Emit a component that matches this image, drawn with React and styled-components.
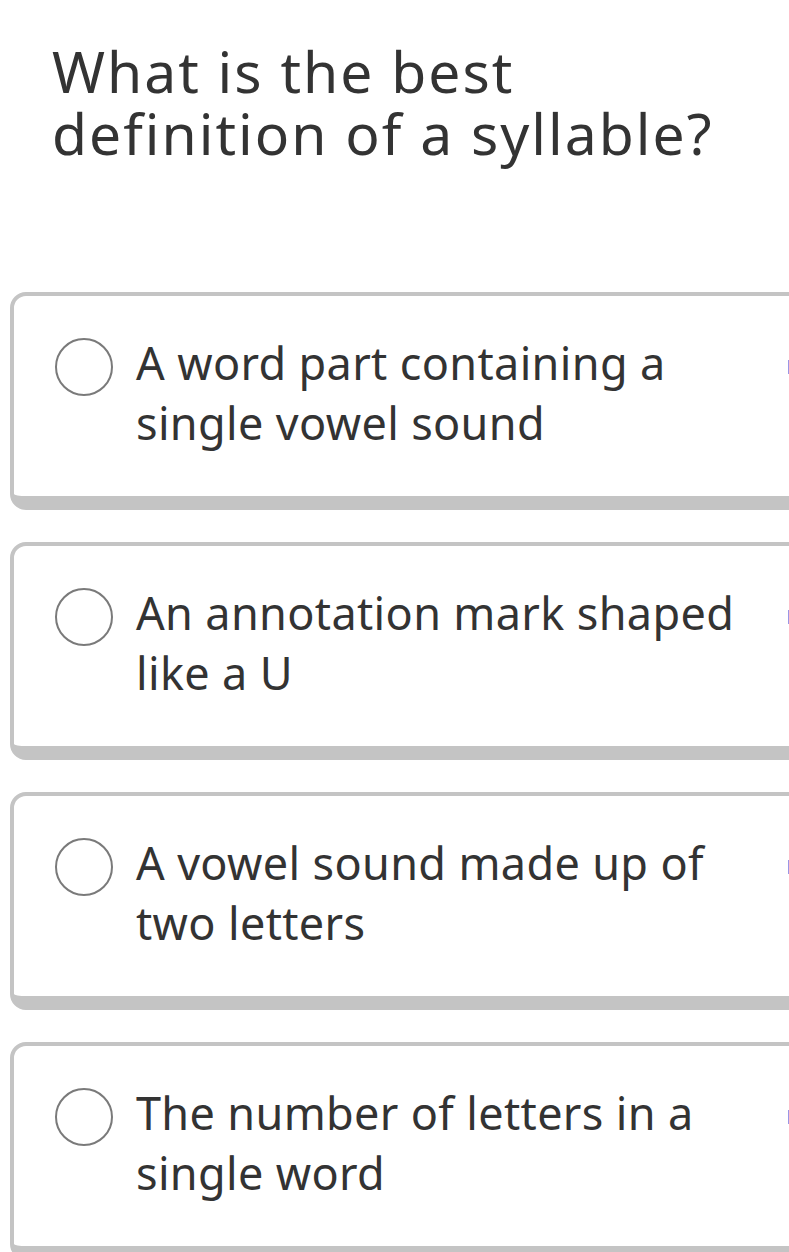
import React from "react";
import styled, { createGlobalStyle } from "styled-components";

const Global = createGlobalStyle`
  html, body {
    margin: 0;
    padding: 0;
    background: #ffffff;
    overflow-x: hidden;
  }
  body {
    font-family: "Noto Sans", "DejaVu Sans", sans-serif;
    color: #333333;
  }
`;

const Page = styled.div`
  width: 789px;
  overflow: hidden;
  padding: 40px 0 40px 0;
`;

const Question = styled.h1`
  margin: 0 0 128px 52px;
  font-size: 57px;
  line-height: 62px;
  font-weight: 400;
  letter-spacing: 2px;
  color: #333333;
  max-width: 720px;
`;

const Options = styled.div`
  display: flex;
  flex-direction: column;
  gap: 32px;
  padding-left: 10px;
`;

const Card = styled.div`
  position: relative;
  box-sizing: border-box;
  width: 820px;
  height: 218px;
  border: 4px solid #c4c4c4;
  border-bottom-width: 14px;
  border-radius: 16px;
  background: #ffffff;
  display: flex;
  align-items: flex-start;
  gap: 23px;
  padding: 42px 0 0 41px;
`;

const Radio = styled.span`
  flex: none;
  box-sizing: border-box;
  width: 58px;
  height: 58px;
  border-radius: 50%;
  border: 2px solid #7a7a7a;
  background: #ffffff;
`;

const Label = styled.div`
  font-size: 45px;
  line-height: 60px;
  letter-spacing: 0.35px;
  color: #333333;
  width: 610px;
  margin-top: -5px;
`;

const Marker = styled.span`
  position: absolute;
  left: 774px;
  top: 64px;
  width: 2px;
  height: 14px;
  background: #9a96e6;
`;

const options = [
  "A word part containing a single vowel sound",
  "An annotation mark shaped like a U",
  "A vowel sound made up of two letters",
  "The number of letters in a single word",
];

export default function App() {
  return (
    <Page>
      <Global />
      <Question>What is the best definition of a syllable?</Question>
      <Options>
        {options.map((o) => (
          <Card key={o}>
            <Radio />
            <Label>{o}</Label>
            <Marker />
          </Card>
        ))}
      </Options>
    </Page>
  );
}
